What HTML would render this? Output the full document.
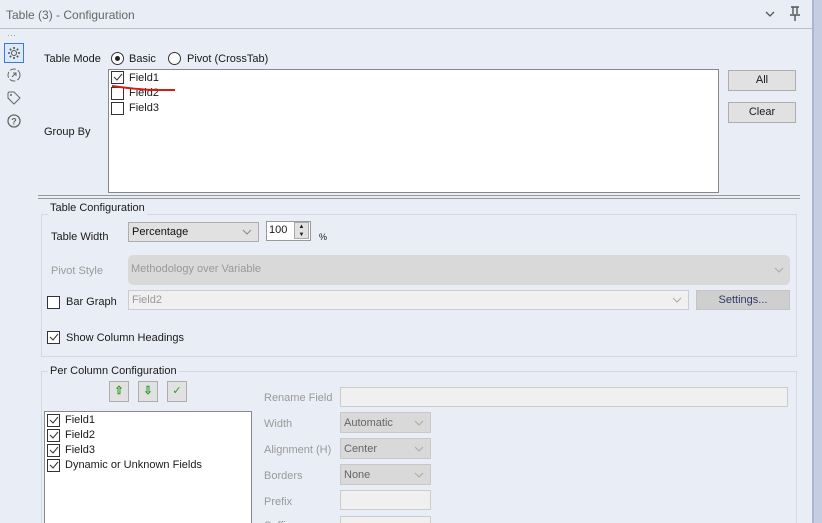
<!DOCTYPE html>
<html style="width:822px;height:523px;overflow:hidden"><head><style>
*{box-sizing:border-box;margin:0;padding:0}
body{width:822px;height:523px;overflow:hidden;background:#e9edf6;font-family:"Liberation Sans",Arial,sans-serif;font-size:11px;color:#1a1a1a;position:relative}
.a{position:absolute}
.t{position:absolute;white-space:nowrap;line-height:13px;margin-top:2px}
.cb{position:absolute;width:13px;height:13px;border:1px solid #333;background:#fff}
.cb svg{position:absolute;left:0;top:0}
.btn{position:absolute;background:#e1e1e1;border:1px solid #adadad;text-align:center;line-height:19px;font-size:11px}
.dd{position:absolute;border:1px solid #c8c8c8;background:#d9d9d9;color:#666;padding-left:3px;line-height:19px}
.chev{position:absolute;right:6px;top:50%;margin-top:-3px;width:10px;height:6px}
.g{color:#9a9a9a}
</style></head><body>
<div class="a" style="left:0;top:0;width:812px;height:29px;background:#e9edf6;border-bottom:1px solid #b9bdc6"></div>
<div class="t" style="left:6px;top:7px;font-size:12px;color:#666">Table (3) - Configuration</div>
<svg class="a" style="left:764px;top:9px" width="12" height="10"><path d="M2 3l4 4 4-4" stroke="#555" fill="none" stroke-width="1.3"/></svg>
<svg class="a" style="left:788px;top:5px" width="14" height="17"><path d="M3 2h8M5 2v7M9 2v7M2 10h10M7 10v6" stroke="#555" fill="none" stroke-width="1.4"/></svg>
<div class="a" style="left:812px;top:0;width:10px;height:523px;background:#c5cde2;border-left:2px solid #aab6d4"></div>
<div class="t" style="left:7px;top:27px;color:#999;font-size:9px">···</div>
<div class="a" style="left:4px;top:43px;width:20px;height:20px;border:1px solid #3b7bd6;background:#dde8f8"></div>
<svg class="a" style="left:6px;top:45px" width="16" height="16"><circle cx="8" cy="8" r="2.5" stroke="#555" fill="none"/><path d="M8 2v2M8 12v2M2 8h2M12 8h2M3.8 3.8l1.4 1.4M10.8 10.8l1.4 1.4M3.8 12.2l1.4-1.4M10.8 5.2l1.4-1.4" stroke="#555" stroke-width="1.6"/></svg>
<svg class="a" style="left:6px;top:67px" width="16" height="16"><circle cx="8" cy="8" r="6" stroke="#666" fill="none" stroke-dasharray="6 2"/><path d="M6 10l4-4M7 6h3v3" stroke="#666" fill="none"/></svg>
<svg class="a" style="left:6px;top:90px" width="16" height="16"><path d="M2 3v5l6 6 6-6-6-6H3z" stroke="#666" fill="none"/><circle cx="5" cy="5" r="1" fill="#666"/></svg>
<svg class="a" style="left:6px;top:113px" width="16" height="16"><circle cx="8" cy="8" r="6" stroke="#666" fill="none" stroke-width="1.3"/><text x="5.3" y="11.5" font-size="9" font-weight="bold" fill="#666" font-family="Liberation Sans">?</text></svg>

<div class="t" style="left:44px;top:51px">Table Mode</div>
<div class="a" style="left:111px;top:52px;width:13px;height:13px;border-radius:50%;border:1px solid #333;background:#fff"><div class="a" style="left:3px;top:3px;width:5px;height:5px;border-radius:50%;background:#222"></div></div>
<div class="t" style="left:129px;top:51px">Basic</div>
<div class="a" style="left:168px;top:52px;width:13px;height:13px;border-radius:50%;border:1px solid #333;background:#fff"></div>
<div class="t" style="left:187px;top:51px">Pivot (CrossTab)</div>
<div class="a" style="left:108px;top:69px;width:611px;height:124px;background:#fff;border:1px solid #888"></div>
<div class="cb" style="left:111px;top:71px"><svg width="11" height="11"><path d="M2 5l3 3 5-6" stroke="#333" fill="none"/></svg></div>
<div class="t" style="left:129px;top:70px">Field1</div>
<div class="cb" style="left:111px;top:87px"></div><div class="t" style="left:129px;top:85px">Field2</div>
<div class="cb" style="left:111px;top:102px"></div><div class="t" style="left:129px;top:100px">Field3</div>
<svg class="a" style="left:108px;top:82px" width="70" height="12"><path d="M4 4c15 2 30 4 45 4s15 0 18 0" stroke="#d61a1a" stroke-width="2" fill="none"/></svg>
<div class="t" style="left:44px;top:124px">Group By</div>
<div class="btn" style="left:728px;top:70px;width:68px;height:21px">All</div>
<div class="btn" style="left:728px;top:102px;width:68px;height:21px">Clear</div>
<div class="a" style="left:38px;top:195px;width:762px;height:4px;border-top:1px solid #999;border-bottom:1px solid #999"></div>

<div class="a" style="left:41px;top:214px;width:756px;height:143px;border:1px solid #d4d8e0"></div>
<div class="t" style="left:48px;top:200px;background:#e9edf6;padding:0 2px">Table Configuration</div>
<div class="t" style="left:51px;top:229px">Table Width</div>
<div class="dd" style="left:128px;top:222px;width:131px;height:20px;background:#e1e1e1;color:#111;border-color:#adadad">Percentage<svg class="chev" viewBox="0 0 10 6"><path d="M1 1l4 4 4-4" stroke="#888" fill="none"/></svg></div>
<div class="a" style="left:266px;top:221px;width:45px;height:20px;background:#fff;border:1px solid #999"></div>
<div class="t" style="left:269px;top:222px">100</div>
<div class="a" style="left:294px;top:222px;width:15px;height:17px;background:#e1e1e1;border:1px solid #aaa;font-size:6px;line-height:8px;text-align:center">▲<br>▼</div>
<div class="t" style="left:319px;top:229px;font-size:9px">%</div>
<div class="t g" style="left:51px;top:263px">Pivot Style</div>
<div class="dd" style="left:128px;top:255px;width:662px;height:30px;border-radius:5px;line-height:29px;border:none;color:#999">Methodology over Variable<svg class="chev" viewBox="0 0 10 6"><path d="M1 1l4 4 4-4" stroke="#aaa" fill="none"/></svg></div>
<div class="cb" style="left:47px;top:296px"></div>
<div class="t" style="left:66px;top:294px">Bar Graph</div>
<div class="dd" style="left:128px;top:290px;width:561px;height:20px;background:#f0f0f0;color:#999;border-color:#ccc">Field2<svg class="chev" viewBox="0 0 10 6"><path d="M1 1l4 4 4-4" stroke="#aaa" fill="none"/></svg></div>
<div class="btn" style="left:696px;top:290px;width:94px;height:20px;background:#cfcfcf;border-color:#c4c4c4;color:#2f3a6a">Settings...</div>
<div class="cb" style="left:47px;top:331px"><svg width="11" height="11"><path d="M2 5l3 3 5-6" stroke="#333" fill="none"/></svg></div>
<div class="t" style="left:66px;top:330px">Show Column Headings</div>

<div class="a" style="left:41px;top:371px;width:756px;height:160px;border:1px solid #d4d8e0"></div>
<div class="t" style="left:48px;top:363px;background:#e9edf6;padding:0 2px">Per Column Configuration</div>
<div class="btn" style="left:109px;top:381px;width:20px;height:21px;color:#2a9a2a;font-weight:bold">⇧</div>
<div class="btn" style="left:138px;top:381px;width:20px;height:21px;color:#2a9a2a;font-weight:bold">⇩</div>
<div class="btn" style="left:167px;top:381px;width:20px;height:21px;color:#2a9a2a">✓</div>
<div class="a" style="left:44px;top:411px;width:208px;height:120px;background:#fff;border:1px solid #888"></div>
<div class="cb" style="left:47px;top:414px"><svg width="11" height="11"><path d="M2 5l3 3 5-6" stroke="#333" fill="none"/></svg></div><div class="t" style="left:65px;top:412px">Field1</div>
<div class="cb" style="left:47px;top:429px"><svg width="11" height="11"><path d="M2 5l3 3 5-6" stroke="#333" fill="none"/></svg></div><div class="t" style="left:65px;top:427px">Field2</div>
<div class="cb" style="left:47px;top:444px"><svg width="11" height="11"><path d="M2 5l3 3 5-6" stroke="#333" fill="none"/></svg></div><div class="t" style="left:65px;top:442px">Field3</div>
<div class="cb" style="left:47px;top:459px"><svg width="11" height="11"><path d="M2 5l3 3 5-6" stroke="#333" fill="none"/></svg></div><div class="t" style="left:65px;top:457px">Dynamic or Unknown Fields</div>
<div class="t g" style="left:264px;top:390px">Rename Field</div>
<div class="a" style="left:340px;top:387px;width:448px;height:20px;background:#f0f0f0;border:1px solid #ccc"></div>
<div class="t g" style="left:264px;top:416px">Width</div>
<div class="dd" style="left:340px;top:412px;width:91px;height:21px;line-height:20px">Automatic<svg class="chev" viewBox="0 0 10 6"><path d="M1 1l4 4 4-4" stroke="#aaa" fill="none"/></svg></div>
<div class="t g" style="left:264px;top:442px">Alignment (H)</div>
<div class="dd" style="left:340px;top:438px;width:91px;height:21px;line-height:20px">Center<svg class="chev" viewBox="0 0 10 6"><path d="M1 1l4 4 4-4" stroke="#aaa" fill="none"/></svg></div>
<div class="t g" style="left:264px;top:468px">Borders</div>
<div class="dd" style="left:340px;top:464px;width:91px;height:21px;line-height:20px">None<svg class="chev" viewBox="0 0 10 6"><path d="M1 1l4 4 4-4" stroke="#aaa" fill="none"/></svg></div>
<div class="t g" style="left:264px;top:494px">Prefix</div>
<div class="a" style="left:340px;top:490px;width:91px;height:20px;background:#f0f0f0;border:1px solid #ccc"></div>
<div class="t g" style="left:264px;top:518px">Suffix</div>
<div class="a" style="left:340px;top:516px;width:91px;height:20px;background:#f0f0f0;border:1px solid #ccc"></div>
</body></html>
